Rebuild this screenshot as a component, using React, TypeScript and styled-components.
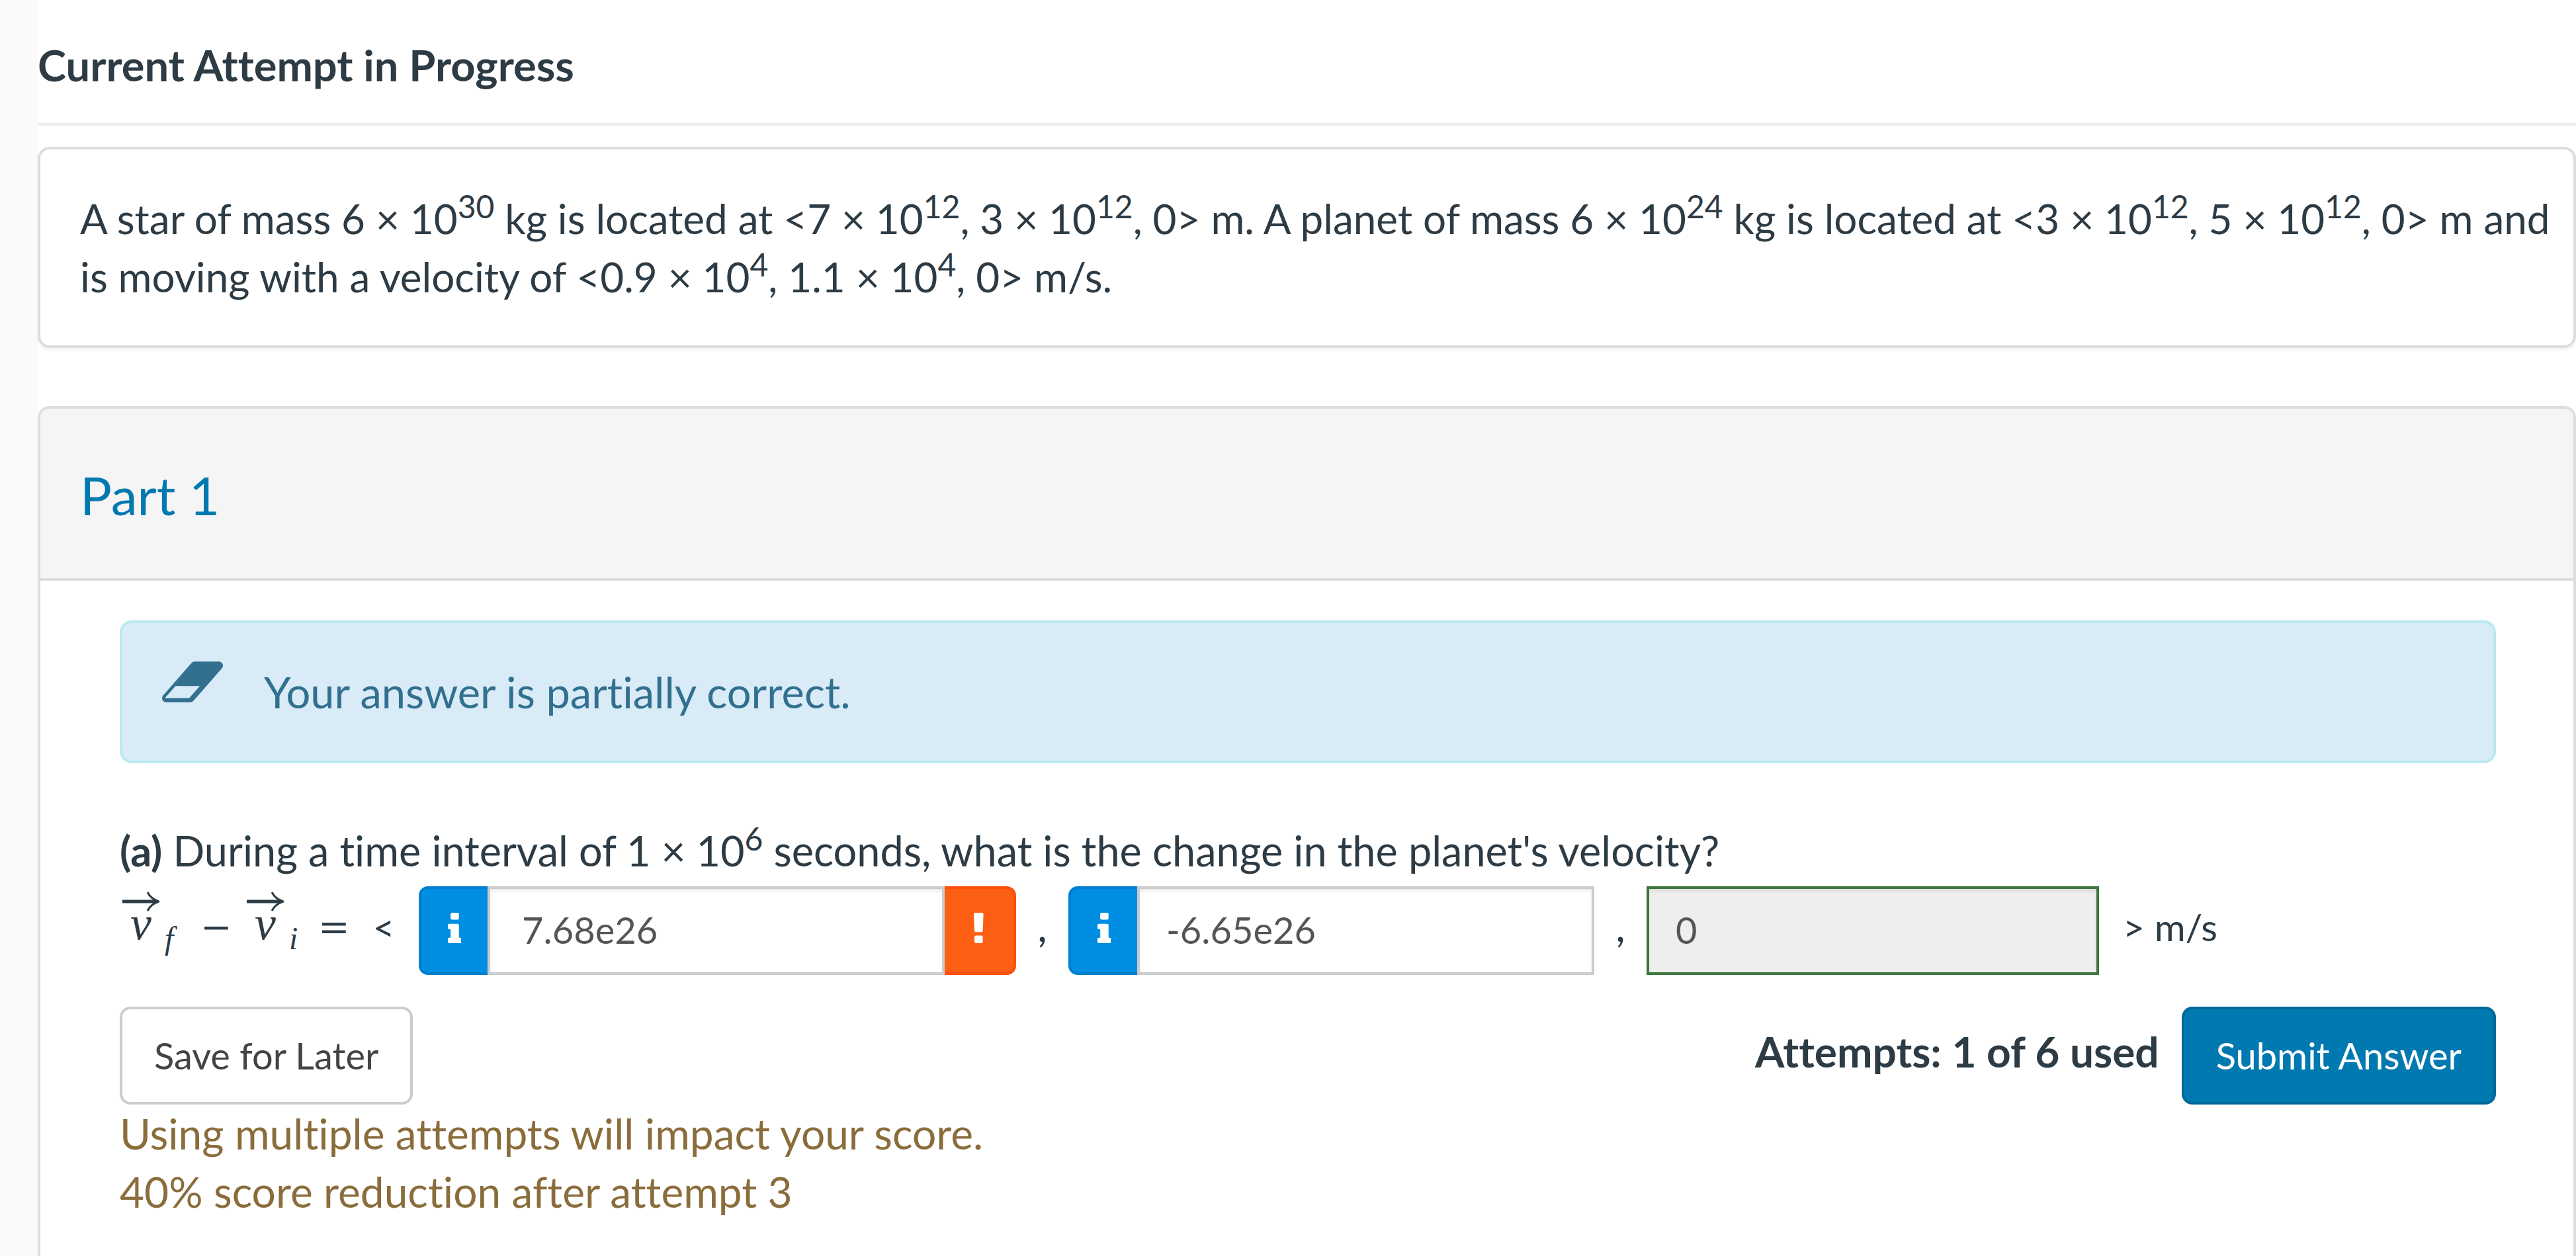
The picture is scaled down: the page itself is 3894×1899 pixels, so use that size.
import React from "react";
import styled, { createGlobalStyle } from "styled-components";

const GlobalStyle = createGlobalStyle`
  *, *::before, *::after { box-sizing: border-box; }
  body {
    margin: 0;
    background: #fafafa;
    color: #2d3b45;
    font-family: Lato, "Open Sans", sans-serif;
    font-size: 64px;
    font-variant-ligatures: none;
    line-height: 88px;
  }
  button, input { font-family: inherit; font-variant-ligatures: none; }
`;

const Page = styled.main`
  display: flex;
  flex-direction: column;
  min-height: 100vh;
  margin-left: 57px;
  background: #fff;
`;

const Title = styled.h1`
  margin: 0;
  padding: 54px 0 44px;
  border-bottom: 4px solid #ececec;
  font-size: 65px;
  line-height: 88px;
  font-weight: 700;
`;

const Card = styled.section`
  margin-top: 32px;
  padding: 60px 24px 60px 60px;
  border: 4px solid #ddd;
  border-radius: 18px;
  background: #fff;
  box-shadow: 0 4px 4px rgba(0, 0, 0, 0.05);
`;

const Paragraph = styled.p`
  margin: 0;
  font-size: 62px;
`;

const Power = styled.sup`
  font-size: 48px;
  line-height: 0;
  vertical-align: 24px;
`;

const Panel = styled.section`
  flex: 1;
  margin-top: 88px;
  border: 4px solid #ddd;
  border-bottom: 0;
  border-radius: 18px 18px 0 0;
`;

const PanelHeader = styled.header`
  padding: 86px 60px 82px;
  border-bottom: 4px solid #ddd;
  border-radius: 14px 14px 0 0;
  background: #f5f5f5;
`;

const PanelTitle = styled.h2`
  margin: 0;
  color: #0079b0;
  font-size: 80px;
  line-height: 88px;
  font-weight: 400;
`;

const PanelBody = styled.div`
  padding: 60px 117px 60px 120px;
`;

const Alert = styled.div`
  display: flex;
  align-items: flex-start;
  gap: 62px;
  height: 216px;
  padding: 58px 60px;
  border: 4px solid #bce8f1;
  border-radius: 18px;
  background: #d9ebf7;
  color: #31708f;
`;

const EraserIcon = styled.svg`
  width: 92px;
  height: 62px;
  fill: currentColor;
`;

const AlertText = styled.span`
  padding-top: 2px;
  font-size: 65px;
`;

const Question = styled.p`
  margin: 88px 0 10px;
  font-size: 63px;
`;

const AnswerRow = styled.div`
  display: flex;
  align-items: center;
`;

const Formula = styled.div`
  display: flex;
  align-items: flex-end;
  width: 452px;
  height: 134px;
  padding: 0 0 46px 4px;
`;

const Vector = styled.span`
  display: flex;
  flex-direction: column;
  align-items: center;
  width: 56px;
  font-family: "Liberation Serif", serif;
  font-size: 72px;
  font-style: italic;
  line-height: 64px;
`;

const VectorArrow = styled.svg`
  width: 56px;
  height: 30px;
  margin-bottom: -14px;
  fill: none;
  stroke: currentColor;
  stroke-width: 5;
`;

const Index = styled.sub`
  width: 32px;
  margin-left: 8px;
  font-family: "Liberation Serif", serif;
  font-size: 48px;
  font-style: italic;
  line-height: 18px;
`;

const Operator = styled.span<{ $width: number; $math?: boolean }>`
  width: ${(p) => p.$width}px;
  font-family: ${(p) => (p.$math ? '"DejaVu Serif", serif' : "inherit")};
  font-size: 57px;
  line-height: 54px;
  text-align: center;
`;

const Group = styled.div`
  display: flex;
  height: 134px;
`;

const Addon = styled.span<{ $tone: "info" | "warn" }>`
  display: flex;
  align-items: center;
  justify-content: center;
  width: ${(p) => (p.$tone === "info" ? 104 : 108)}px;
  padding-bottom: 8px;
  border: 4px solid ${(p) => (p.$tone === "info" ? "#007fcf" : "#fa4f0a")};
  border-width: 4px ${(p) => (p.$tone === "info" ? "0 4px 4px" : "4px 4px 0")};
  border-radius: ${(p) => (p.$tone === "info" ? "14px 0 0 14px" : "0 14px 14px 0")};
  background: ${(p) => (p.$tone === "info" ? "#008ee2" : "#fc5e13")};
`;

const Glyph = styled.svg`
  height: 46px;
  fill: #fff;
`;

const Field = styled.input<{ $correct?: boolean; $flagged?: boolean }>`
  width: ${(p) => (p.$correct ? 684 : 691)}px;
  height: 134px;
  padding: 0 40px 4px ${(p) => (p.$flagged ? 48 : 40)}px;
  border: 4px solid ${(p) => (p.$correct ? "#3c763d" : "#ccc")};
  border-radius: 0;
  outline: 0;
  background: ${(p) => (p.$correct ? "#eee" : "#fff")};
  box-shadow: inset 0 4px 4px rgba(0, 0, 0, 0.075);
  color: #555;
  font-size: 56px;
`;

const Separator = styled.span`
  width: 79px;
  padding-bottom: 14px;
  text-align: center;
`;

const Unit = styled.span`
  padding: 0 0 12px 36px;
  font-size: 57px;
`;

const Actions = styled.div`
  display: flex;
  align-items: center;
  margin-top: 48px;
`;

const Button = styled.button<{ $primary?: boolean }>`
  height: 148px;
  padding: 0 48px;
  border: 4px solid ${(p) => (p.$primary ? "#00699a" : "#ccc")};
  border-radius: 16px;
  background: ${(p) => (p.$primary ? "#0079b0" : "#fff")};
  color: ${(p) => (p.$primary ? "#fff" : "#444")};
  font-size: 56px;
  line-height: 80px;
`;

const Attempts = styled.strong`
  margin: 0 34px 0 auto;
  padding-bottom: 12px;
`;

const Notice = styled.p`
  margin: 0;
  color: #8a6d3b;
`;

const Times = ({ base, exp }: { base: string; exp: string }) => (
  <>
    {`${base} × 10`}
    <Power>{exp}</Power>
  </>
);

const Velocity = ({ index }: { index: string }) => (
  <>
    <Vector>
      <VectorArrow viewBox="0 0 56 30" aria-hidden="true">
        <path d="M0 15H53" />
        <path d="M38 1Q43 11 55 15Q43 19 38 29" strokeWidth="3" />
      </VectorArrow>
      v
    </Vector>
    <Index>{index}</Index>
  </>
);

const InfoGlyph = () => (
  <Glyph viewBox="0 128 640 1408" aria-hidden="true">
    <path d="M640 1344v128q0 26-19 45t-45 19h-512q-26 0-45-19t-19-45v-128q0-26 19-45t45-19h64v-384h-64q-26 0-45-19t-19-45v-128q0-26 19-45t45-19h384q26 0 45 19t19 45v576h64q26 0 45 19t19 45zm-128-1152v192q0 26-19 45t-45 19h-256q-26 0-45-19t-19-45v-192q0-26 19-45t45-19h256q26 0 45 19t19 45z" />
  </Glyph>
);

const WarnGlyph = () => (
  <Glyph viewBox="0 128 512 1408" aria-hidden="true">
    <path d="M417 1248v224q0 26-19 45t-45 19h-256q-26 0-45-19t-19-45v-224q0-26 19-45t45-19h256q26 0 45 19t19 45zm30-1056l-28 768q-1 26-20.500 45t-45.500 19h-256q-26 0-45.500-19t-20.500-45l-28-768q-1-26 17.500-45t44.500-19h320q26 0 44.500 19t17.500 45z" />
  </Glyph>
);

export default function App() {
  return (
    <>
      <GlobalStyle />
      <Page>
        <Title>Current Attempt in Progress</Title>
        <Card>
          <Paragraph>
            A star of mass <Times base="6" exp="30" /> kg is located at &lt;
            <Times base="7" exp="12" />, <Times base="3" exp="12" />, 0&gt; m. A planet of mass{" "}
            <Times base="6" exp="24" /> kg is located at &lt;
            <Times base="3" exp="12" />, <Times base="5" exp="12" />, 0&gt; m and{" "}
            {"is moving with a velocity of <"}
            <Times base="0.9" exp="4" />, <Times base="1.1" exp="4" />, 0&gt; m/s.
          </Paragraph>
        </Card>
        <Panel>
          <PanelHeader>
            <PanelTitle>Part 1</PanelTitle>
          </PanelHeader>
          <PanelBody>
            <Alert role="status">
              <EraserIcon viewBox="104 256 1920 1280" aria-hidden="true">
                <path d="M960 1408l336-384h-768l-336 384h768zm1053-1077q15 34 9.500 71.500t-30.500 65.500l-896 1024q-38 44-96 44h-768q-38 0-69.500-20.500t-47.500-54.500q-15-34-9.500-71.500t30.500-65.500l896-1024q38-44 96-44h768q38 0 69.500 20.500t47.500 54.500z" />
              </EraserIcon>
              <AlertText>Your answer is partially correct.</AlertText>
            </Alert>
            <Question>
              <strong>(a)</strong> During a time interval of <Times base="1" exp="6" /> seconds,
              what is the change in the planet's velocity?
            </Question>
            <AnswerRow>
              <Formula>
                <Velocity index="f" />
                <Operator $width={92} $math>
                  −
                </Operator>
                <Velocity index="i" />
                <Operator $width={72} $math>
                  =
                </Operator>
                <Operator $width={78}>&lt;</Operator>
              </Formula>
              <Group>
                <Addon $tone="info">
                  <InfoGlyph />
                </Addon>
                <Field $flagged aria-label="x component" defaultValue="7.68e26" />
                <Addon $tone="warn">
                  <WarnGlyph />
                </Addon>
              </Group>
              <Separator>,</Separator>
              <Group>
                <Addon $tone="info">
                  <InfoGlyph />
                </Addon>
                <Field aria-label="y component" defaultValue="-6.65e26" />
              </Group>
              <Separator>,</Separator>
              <Field $correct readOnly aria-label="z component" defaultValue="0" />
              <Unit>&gt; m/s</Unit>
            </AnswerRow>
            <Actions>
              <Button type="button">Save for Later</Button>
              <Attempts>Attempts: 1 of 6 used</Attempts>
              <Button type="button" $primary>
                Submit Answer
              </Button>
            </Actions>
            <Notice>
              Using multiple attempts will impact your score.
              <br />
              40% score reduction after attempt 3
            </Notice>
          </PanelBody>
        </Panel>
      </Page>
    </>
  );
}
